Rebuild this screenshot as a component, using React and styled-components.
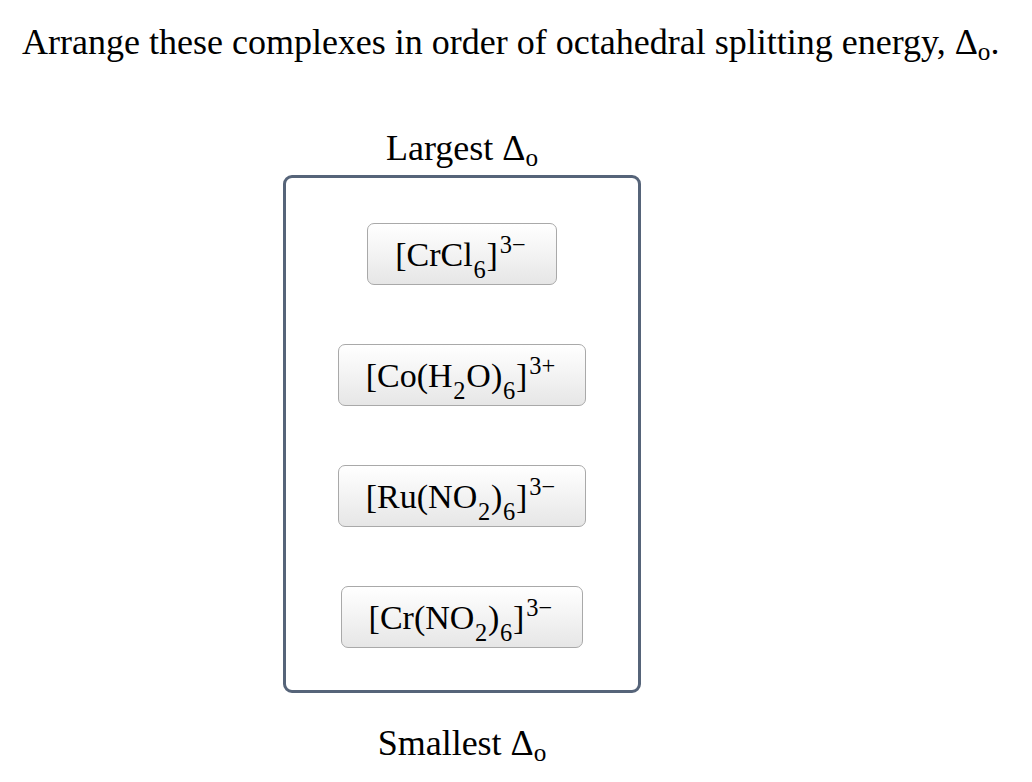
import React from 'react';
import styled, { createGlobalStyle } from 'styled-components';

const GlobalStyle = createGlobalStyle`
  html, body {
    margin: 0;
    padding: 0;
    background: #ffffff;
  }
  body {
    font-family: "Liberation Serif", "Times New Roman", serif;
    color: #000;
  }
`;

const Page = styled.div`
  width: 1032px;
  height: 782px;
  overflow: hidden;
`;

const Prompt = styled.p`
  margin: 0;
  padding: 22px 0 0 22px;
  font-size: 36px;
  line-height: 40px;
  white-space: nowrap;
`;

const Sub = styled.sub`
  font-size: 0.7em;
  vertical-align: -0.25em;
  line-height: 0;
`;

const Column = styled.div`
  width: 358px;
  margin: 66px 0 0 283px;
  display: flex;
  flex-direction: column;
  align-items: center;
`;

const RankLabel = styled.div`
  font-size: 36px;
  line-height: 40px;
  margin: ${({ $bottom }) => ($bottom ? '30px 0 0' : '0 0 7px')};
`;

const DropZone = styled.div`
  box-sizing: border-box;
  width: 358px;
  height: 518px;
  border: 3.5px solid #566479;
  border-radius: 9px;
  display: flex;
  flex-direction: column;
  align-items: center;
  padding-top: 45px;
  gap: 59px;
`;

const Chip = styled.button`
  box-sizing: border-box;
  height: 62px;
  padding: 0 30px 0 27px;
  border: 1.5px solid #a9a9a9;
  border-radius: 7px;
  background: linear-gradient(to bottom, #ffffff 0%, #f3f3f3 50%, #e6e6e6 100%);
  font-family: "Liberation Serif", "Times New Roman", serif;
  font-size: 34px;
  color: #000;
  display: flex;
  align-items: center;
  cursor: pointer;
`;

const Formula = styled.span`
  position: relative;
  top: 1px;
  white-space: nowrap;
`;

const Lo = styled.span`
  font-size: 0.72em;
  position: relative;
  top: 0.5em;
  margin: 0 0.03em;
`;

const Hi = styled.span`
  font-size: 0.72em;
  position: relative;
  top: -0.55em;
  margin-left: 0.08em;
`;

const complexes = [
  { key: 'crcl', body: <>[CrCl<Lo>6</Lo>]<Hi>3−</Hi></> },
  { key: 'coh2o', body: <>[Co(H<Lo>2</Lo>O)<Lo>6</Lo>]<Hi>3+</Hi></> },
  { key: 'runo2', body: <>[Ru(NO<Lo>2</Lo>)<Lo>6</Lo>]<Hi>3−</Hi></> },
  { key: 'crno2', body: <>[Cr(NO<Lo>2</Lo>)<Lo>6</Lo>]<Hi>3−</Hi></> },
];

export default function App() {
  return (
    <Page>
      <GlobalStyle />
      <Prompt>
        Arrange these complexes in order of octahedral splitting energy, Δ<Sub>o</Sub>.
      </Prompt>
      <Column>
        <RankLabel>
          Largest Δ<Sub>o</Sub>
        </RankLabel>
        <DropZone>
          {complexes.map((c) => (
            <Chip key={c.key} type="button">
              <Formula>{c.body}</Formula>
            </Chip>
          ))}
        </DropZone>
        <RankLabel $bottom>
          Smallest Δ<Sub>o</Sub>
        </RankLabel>
      </Column>
    </Page>
  );
}
